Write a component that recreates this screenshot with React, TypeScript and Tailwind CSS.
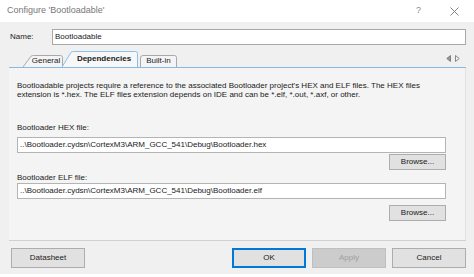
export default function App() {
  return (
    <div className="w-[474px] h-[277px] bg-white font-['Liberation_Sans',Arial,sans-serif] text-[8px] text-[#1a1a1a] overflow-hidden">
      {/* title bar */}
      <div className="h-[22px] flex items-center pl-[7px] pr-[15px] text-[9px] text-[#777]">
        <span>Configure 'Bootloadable'</span>
        <span className="ml-auto mr-[29px] text-[9px] text-[#888]">?</span>
        <svg width="9" height="9" viewBox="0 0 9 9">
          <path d="M0.5 0.5 L8.5 8.5 M8.5 0.5 L0.5 8.5" stroke="#777" strokeWidth="0.9" />
        </svg>
      </div>

      <div className="bg-[#f0f0f0] h-[252px] pl-[9px] pr-[8px] pt-[7px] flex flex-col">
        {/* name */}
        <div className="h-[16px] flex items-center">
          <span className="w-[43px] pl-[1px]">Name:</span>
          <div className="flex-1 h-[16px] bg-white border border-[#a8a8a8] flex items-center pl-[2px]">
            Bootloadable
          </div>
        </div>

        {/* tab strip */}
        <div className="mt-[6px] h-[17px] flex items-end border-b border-[#86b9e8] pl-[14px]">
          <div className="relative w-[40px] h-[12px] flex items-center justify-center pl-[6px]">
            <svg className="absolute inset-0" width="40" height="12" viewBox="0 0 40 12">
              <path d="M0 12 L8 1.2 Q9 0.5 10.5 0.5 L37.5 0.5 Q39.5 0.5 39.5 2.5 L39.5 12" fill="#f4f4f4" stroke="#a9a9a9" />
            </svg>
            <span className="relative">General</span>
          </div>
          <div className="relative -ml-[1px] w-[76px] h-[16px] flex items-center justify-center pl-[8px]">
            <svg className="absolute inset-0" width="76" height="16" viewBox="0 0 76 16">
              <path d="M0 16 L9 1.4 Q10 0.5 11.5 0.5 L73.5 0.5 Q75.5 0.5 75.5 2.5 L75.5 16" fill="#f7f7f7" stroke="#8cbfe9" />
            </svg>
            <span className="relative font-bold">Dependencies</span>
          </div>
          <div className="relative ml-[2px] w-[37px] h-[12px] flex items-center justify-center">
            <svg className="absolute inset-0" width="37" height="12" viewBox="0 0 37 12">
              <path d="M0.5 12 L0.5 3 Q0.5 0.5 3 0.5 L34.5 0.5 Q36.5 0.5 36.5 2.5 L36.5 12" fill="#f4f4f4" stroke="#a9a9a9" />
            </svg>
            <span className="relative">Built-in</span>
          </div>
          <div className="ml-auto mr-[6px] mb-[5px] flex items-center gap-[4px]">
            <svg width="5" height="7" viewBox="0 0 5 7">
              <path d="M4.5 0.5 L0.8 3.5 L4.5 6.5 Z" fill="#9a9a9a" stroke="#6e6e6e" strokeWidth="0.8" />
            </svg>
            <svg width="5" height="7" viewBox="0 0 5 7">
              <path d="M0.5 0.5 L4.2 3.5 L0.5 6.5 Z" fill="none" stroke="#6e6e6e" strokeWidth="0.8" />
            </svg>
          </div>
        </div>

        {/* tab page */}
        <div className="h-[172px] bg-[#f4f4f4] border-r border-[#e2e2e2] pl-[8px] pr-[19px] pt-[13px] flex flex-col">
          <p className="leading-[9px] whitespace-nowrap">
            Bootloadable projects require a reference to the associated Bootloader project's HEX and ELF files. The HEX files
            <br />
            extension is *.hex. The ELF files extension depends on IDE and can be *.elf, *.out, *.axf, or other.
          </p>

          <div className="mt-[24px] h-[10px] leading-[10px]">Bootloader HEX file:</div>
          <div className="mt-[4px] h-[16px] bg-white border border-[#b4b4b4] flex items-center pl-[2px]">
            ..\Bootloader.cydsn\CortexM3\ARM_GCC_541\Debug\Bootloader.hex
          </div>
          <button className="mt-[1px] self-end w-[57px] h-[16px] bg-[#e1e1e1] border border-[#adadad] flex items-center justify-center">
            Browse...
          </button>

          <div className="mt-[3px] h-[10px] leading-[10px]">Bootloader ELF file:</div>
          <div className="mt-[0px] h-[16px] bg-white border border-[#b4b4b4] flex items-center pl-[2px]">
            ..\Bootloader.cydsn\CortexM3\ARM_GCC_541\Debug\Bootloader.elf
          </div>
          <button className="mt-[6px] self-end w-[57px] h-[16px] bg-[#e1e1e1] border border-[#adadad] flex items-center justify-center">
            Browse...
          </button>
        </div>

        {/* bottom buttons */}
        <div className="border-t border-[#d0d0d0] pt-[7px] flex items-center pl-[2px]">
          <button className="w-[74px] h-[20px] bg-[#e1e1e1] border border-[#adadad] flex items-center justify-center">
            Datasheet
          </button>
          <button className="ml-auto w-[74px] h-[20px] bg-[#e1e1e1] border-2 border-[#0078d7] flex items-center justify-center">
            OK
          </button>
          <button className="ml-[6px] w-[74px] h-[20px] bg-[#cccccc] border border-[#bfbfbf] text-[#a0a0a0] flex items-center justify-center" disabled>
            Apply
          </button>
          <button className="ml-[6px] w-[74px] h-[20px] bg-[#e1e1e1] border border-[#adadad] flex items-center justify-center">
            Cancel
          </button>
        </div>
      </div>
    </div>
  );
}
